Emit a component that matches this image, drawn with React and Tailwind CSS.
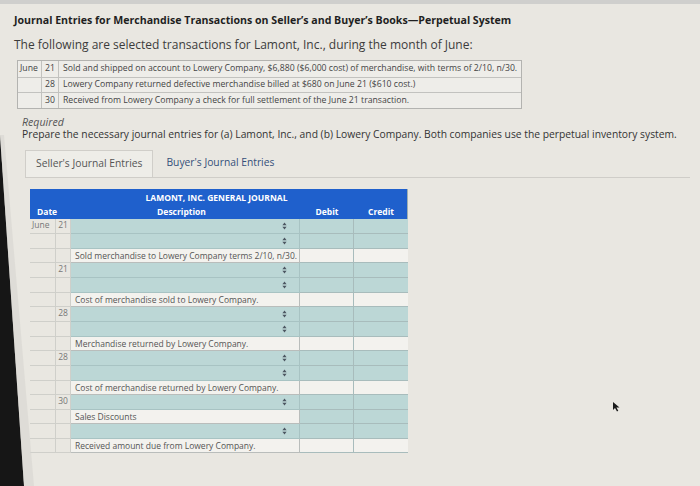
import React from 'react'

const transactions = [
  { month: 'June', day: '21', text: 'Sold and shipped on account to Lowery Company, $6,880 ($6,000 cost) of merchandise, with terms of 2/10, n/30.' },
  { month: '', day: '28', text: 'Lowery Company returned defective merchandise billed at $680 on June 21 ($610 cost.)' },
  { month: '', day: '30', text: 'Received from Lowery Company a check for full settlement of the June 21 transaction.' },
]

// kind: select = teal dropdown row, note = white explanation row, fixed = account name w/o dropdown
const rows = [
  { month: 'June', day: '21', kind: 'select' },
  { kind: 'select' },
  { kind: 'note', text: 'Sold merchandise to Lowery Company terms 2/10, n/30.' },
  { day: '21', kind: 'select' },
  { kind: 'select' },
  { kind: 'note', text: 'Cost of merchandise sold to Lowery Company.' },
  { day: '28', kind: 'select' },
  { kind: 'select' },
  { kind: 'note', text: 'Merchandise returned by Lowery Company.' },
  { day: '28', kind: 'select' },
  { kind: 'select' },
  { kind: 'note', text: 'Cost of merchandise returned by Lowery Company.' },
  { day: '30', kind: 'select' },
  { kind: 'fixed', text: 'Sales Discounts' },
  { kind: 'select' },
  { kind: 'note', text: 'Received amount due from Lowery Company.' },
]

function Spinner() {
  return (
    <svg width="5" height="8" viewBox="0 0 5 8" className="shrink-0">
      <path d="M2.5 0.5 L4.6 3.2 L0.4 3.2 Z" fill="#4b5560" />
      <path d="M2.5 7.5 L4.6 4.8 L0.4 4.8 Z" fill="#4b5560" />
    </svg>
  )
}

function JournalRow({ row }) {
  const h = row.kind === 'select' ? 'h-[15px]' : 'h-[14px]'
  const amountBg = row.kind === 'note' ? 'bg-[#f3f2ee]' : 'bg-[#bcd7d6]'
  return (
    <div className={`grid grid-cols-[26px_15px_229px_54px_54px] ${h}`}>
      <div className="border-b border-r border-[#cfcfca] text-[8.5px] text-[#777] pl-[2px] flex items-center">{row.month}</div>
      <div className="border-b border-r border-[#cfcfca] text-[8.5px] text-[#777] flex items-center justify-center">{row.day}</div>
      {row.kind === 'select' && (
        <div className="bg-[#bcd7d6] border-b border-r border-[#a8c3c3] flex items-center justify-end pr-[12px]">
          <Spinner />
        </div>
      )}
      {row.kind !== 'select' && (
        <div className="bg-[#f3f2ee] border-b border-r border-[#b9bdbb] text-[8.5px] leading-[11px] text-[#555] pl-[4px] flex items-center whitespace-nowrap overflow-hidden">
          {row.text}
        </div>
      )}
      <div className={`${amountBg} border-b border-r border-[#a8bcbc]`} />
      <div className={`${amountBg} border-b border-[#a8bcbc]`} />
    </div>
  )
}

export default function App() {
  return (
    <div className="relative w-[700px] h-[486px] overflow-hidden bg-[#e9e7e1] font-['Open_Sans',sans-serif]">
      <div className="h-[4px] bg-[#cfcfcd]" />

      <div className="pl-[14px] pt-[9px]">
        <h1 className="text-[10.6px] leading-[14px] font-bold text-[#1f1f1f]">
          Journal Entries for Merchandise Transactions on Seller’s and Buyer’s Books—Perpetual System
        </h1>
        <p className="mt-[11px] text-[12px] leading-[14px] text-[#3c3c3c]">
          The following are selected transactions for Lamont, Inc., during the month of June:
        </p>

        {/* Transactions */}
        <div className="mt-[8px] ml-[3px] w-[505px] border border-[#b3b3b0] bg-[#eeede9]">
          {transactions.map((t, i) => (
            <div key={i} className={`grid grid-cols-[24px_17px_1fr] h-[15.5px] ${i > 0 ? 'border-t border-[#c2c2bf]' : ''}`}>
              <div className="border-r border-[#c2c2bf] text-[8.7px] text-[#444] pl-[2px] flex items-center">{t.month}</div>
              <div className="border-r border-[#c2c2bf] text-[8.7px] text-[#444] flex items-center justify-center">{t.day}</div>
              <div className="text-[8.7px] text-[#444] pl-[4px] flex items-center whitespace-nowrap">{t.text}</div>
            </div>
          ))}
        </div>

        <div className="ml-[8px] mt-[7px]">
          <p className="text-[10.6px] leading-[12px] italic text-[#555]">Required</p>
          <p className="text-[10.3px] leading-[12px] text-[#333]">
            Prepare the necessary journal entries for (a) Lamont, Inc., and (b) Lowery Company. Both companies use the perpetual inventory system.
          </p>
        </div>

        {/* Tabs */}
        <div className="ml-[11px] mt-[10px] mr-[10px] flex items-end border-b border-[#cfcdc8]">
          <div className="h-[27px] px-[10px] flex items-center border border-b-0 border-[#d0cec9] bg-[#eeede8] text-[10.3px] text-[#555]">
            Seller's Journal Entries
          </div>
          <div className="h-[27px] px-[13px] flex items-center text-[10.3px] text-[#34507a]">
            Buyer's Journal Entries
          </div>
        </div>

        {/* General journal */}
        <div className="ml-[16px] mt-[11px] w-[378px] border-r border-[#9fb0b0]">
          <div className="h-[30px] bg-[#1f60cc] text-white font-bold text-[8.5px] leading-[10px] pt-[4px]">
            <div className="text-center pr-[4px]">LAMONT, INC. GENERAL JOURNAL</div>
            <div className="grid grid-cols-[41px_229px_54px_54px] mt-[4px]">
              <div className="pl-[7px]">Date</div>
              <div className="text-center pr-[8px]">Description</div>
              <div className="text-center">Debit</div>
              <div className="text-center">Credit</div>
            </div>
          </div>
          {rows.map((row, i) => (
            <JournalRow key={i} row={row} />
          ))}
        </div>
      </div>

      {/* bezel from the photo */}
      <svg className="absolute left-0 top-0" width="40" height="486" viewBox="0 0 40 486">
        <polygon points="0,135 24,486 0,486" fill="#161616" />
        <polygon points="0,135 24,486 34,486 4,135" fill="#d7d6d1" opacity="0.6" />
      </svg>

      {/* mouse cursor */}
      <svg className="absolute left-[612px] top-[401px]" width="9" height="11" viewBox="0 0 9 11">
        <path d="M1 1 L1 9 L3 7 L5 10.5 L6.3 9.8 L4.4 6.5 L7.5 6.5 Z" fill="#1a1a1a" />
      </svg>
    </div>
  )
}
